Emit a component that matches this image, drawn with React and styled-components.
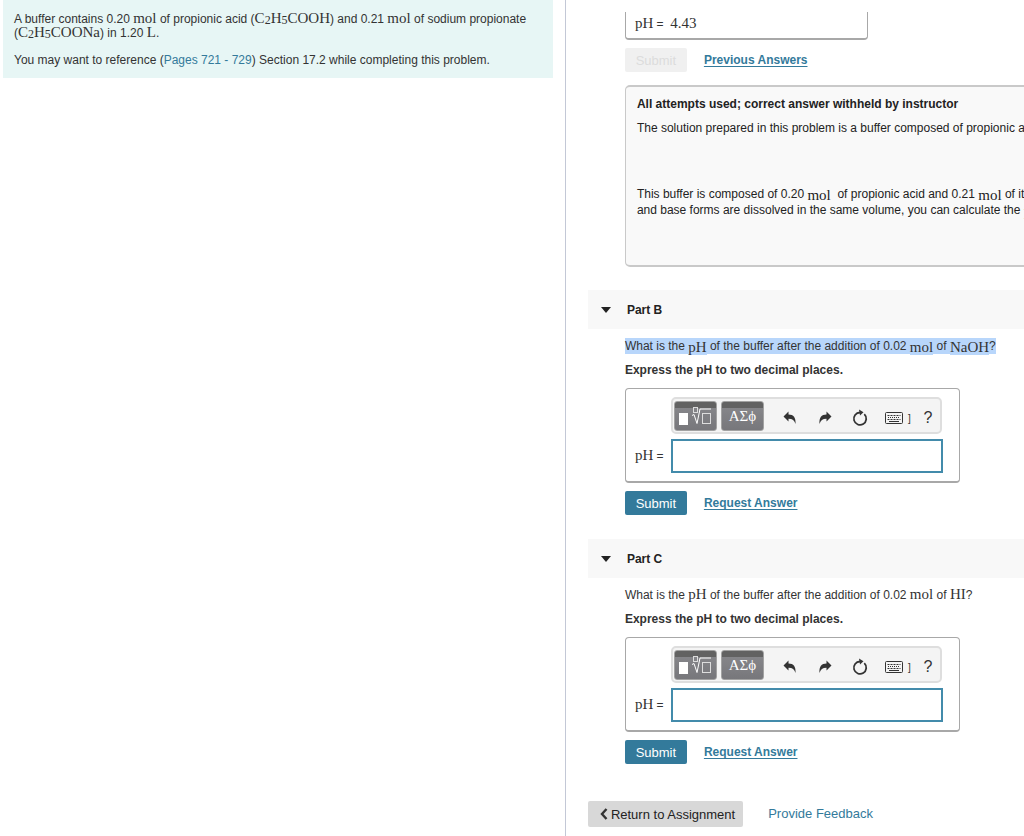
import React from 'react';
import styled, { createGlobalStyle, css } from 'styled-components';

const GlobalStyle = createGlobalStyle`
  * { box-sizing: border-box; }
  body {
    margin: 0;
    background: #fff;
    color: #333;
    font: 12px/16px "Liberation Sans", Arial, sans-serif;
  }
  p, h2 { margin: 0; }
  button, input { font-family: inherit; }
`;

const Page = styled.div`
  display: grid;
  grid-template-columns: minmax(0, 21fr) minmax(0, 17fr);
  min-height: 100vh;
`;

const LeftPanel = styled.aside`
  padding: 0 12px 0 3px;
  border-right: 1px solid #c3c8d6;
`;

const RightPanel = styled.main`
  overflow: hidden;
  padding: 12px 0 9px 22px;
`;

const Intro = styled.section`
  padding: 12px 11px 11px;
  background: #e7f6f5;
  line-height: 14px;

  p + p { margin-top: 13px; }
`;

const TextLink = styled.a`
  color: #337a9b;
  text-decoration: none;
`;

const ActionLink = styled.a`
  color: #337a9b;
  font-size: 12px;
  font-weight: bold;
  text-decoration: underline;
  text-underline-offset: 2px;
`;

const Math = styled.span`
  font-family: "Liberation Serif", "Times New Roman", serif;
  font-size: 15px;
  line-height: 0;
  vertical-align: ${({ $low }) => ($low ? '-2px' : 'baseline')};
`;

const Sub = styled.span`
  font-size: 12px;
  vertical-align: -1px;
`;

const Content = styled.div`
  padding-left: 37px;
`;

const PreviousAnswer = styled.div`
  width: 243px;
  height: 28px;
  padding: 4px 9px;
  border: 1px solid #a8a8a8;
  border-width: 0 1px 2px 1px;
  border-radius: 0 0 4px 4px;
  white-space: pre;
`;

const Actions = styled.div`
  display: flex;
  align-items: center;
  gap: 17px;
  margin-top: 8px;
`;

const SubmitButton = styled.button`
  width: 62px;
  height: 24px;
  padding: 0;
  border: 0;
  border-radius: 2px;
  background: #337a9b;
  color: #fff;
  font-size: 13px;

  &:disabled {
    background: #f0f0f0;
    color: #dcdcdc;
  }
`;

const Feedback = styled.section`
  min-width: 480px;
  height: 182px;
  margin-top: 13px;
  padding: 9px 11px;
  border: 2px solid #c9c9c9;
  border-left-width: 1px;
  border-radius: 5px;
  background: #f9f9f9;
  color: #222;
  white-space: nowrap;

  h2 {
    margin-bottom: 8px;
    font-size: 12px;
    line-height: 16px;
  }

  p + p { margin-top: 50px; }
`;

const PartSection = styled.section`
  margin-top: 23px;

  & + & { margin-top: 24px; }
`;

const PartHeader = styled.button`
  display: flex;
  align-items: center;
  gap: 16px;
  width: 100%;
  height: 39px;
  padding: 0 13px;
  border: 0;
  background: #f8f8f8;
  color: #222;
  font-size: 12px;
  font-weight: bold;
`;

const Question = styled.p`
  height: 16px;
  margin-top: 9px;
  white-space: nowrap;

  mark {
    padding: 1px 0;
    background: #b8d6fb;
    color: inherit;
  }

  mark span { background: #b8d6fb; }
`;

const Instruction = styled.p`
  margin-top: 8px;
  font-weight: bold;
`;

const AnswerBox = styled.div`
  display: grid;
  grid-template-columns: 36px minmax(0, 1fr);
  row-gap: 5px;
  align-items: center;
  width: 335px;
  margin-top: 10px;
  padding: 8px 16px 8px 9px;
  border: 1px solid #a8a8a8;
  border-bottom-width: 2px;
  border-radius: 4px;
`;

const Toolbar = styled.div`
  grid-column: 2;
  display: flex;
  align-items: center;
  height: 37px;
  margin-right: 1px;
  padding-left: 1px;
  border: 2px solid #dedede;
  border-radius: 5px;
  background: #f4f4f4;
`;

const toolReset = css`
  display: flex;
  align-items: center;
  justify-content: center;
  flex-shrink: 0;
  padding: 0;
  border: 0;
`;

const PaletteButton = styled.button`
  ${toolReset}
  width: 43px;
  height: 30px;
  margin-right: 4px;
  border: 1px solid #a2a2a2;
  border-radius: 3px;
  background: linear-gradient(#626262 0 6px, #858589 6px, #77777b);
  color: #fff;
  font: 15px/24px "Liberation Serif", serif;
`;

const ToolButton = styled.button`
  ${toolReset}
  width: 35px;
  height: 30px;
  padding-top: 5px;
  background: none;
  color: #333;
  font-size: 16px;
`;

const Tools = styled.div`
  display: flex;
  margin-left: 5px;
`;

const AnswerInput = styled.input`
  width: 100%;
  height: 34px;
  padding: 0 8px;
  border: 2px solid #438bab;
  border-radius: 0;
  background: #fff;
  font-size: 14px;
  outline: 0;
`;

const Footer = styled.footer`
  display: flex;
  align-items: center;
  gap: 25px;
  margin-top: 37px;
  font-size: 13px;
`;

const ReturnButton = styled.button`
  display: flex;
  align-items: center;
  gap: 3px;
  height: 26px;
  padding: 0 8px 0 12px;
  border: 0;
  border-radius: 2px;
  background: #d8d8d8;
  color: #222;
  font-size: 13px;
  white-space: nowrap;
`;

function TemplateIcon() {
  return (
    <svg width="34" height="20" viewBox="0 0 34 20" fill="none" stroke="#fff">
      <rect x="1" y="7" width="9" height="12" fill="#fff" stroke="none" />
      <rect x="15.5" y="1.5" width="4" height="5" stroke="#ddd" />
      <path d="M14 9.500l2-1 3 9 3-14.500h11" />
      <rect x="24.500" y="7.500" width="8" height="10" stroke="#ddd" />
    </svg>
  );
}

function CurvedArrow({ flip }) {
  return (
    <svg width="14" height="14" viewBox="0 0 14 14">
      <path
        d="M0.500 5.500L5.500 0.500V3.500C10.500 3.500 13 6.500 12.500 13C11.500 9.500 9.500 7.800 5.500 7.800V10.500Z"
        fill="#333"
        transform={flip ? 'matrix(-1 0 0 1 14 0)' : undefined}
      />
    </svg>
  );
}

function ResetIcon() {
  return (
    <svg width="16" height="18" viewBox="0 0 16 18">
      <path d="M12.300 5.200A6.200 6.200 0 1 1 8 3.500" fill="none" stroke="#333" strokeWidth="1.800" />
      <path d="M7 0.500L11.500 3.300L8 6.500Z" fill="#333" />
    </svg>
  );
}

function KeyboardIcon() {
  return (
    <svg width="18" height="12" viewBox="0 0 18 12" fill="none" stroke="#333">
      <rect x="0.500" y="0.500" width="17" height="11" rx="1" />
      <path d="M2.500 3.500h13" strokeDasharray="2 1" />
      <path d="M3 5.500h12" strokeDasharray="1 1" />
      <path d="M2.500 7.500h13" strokeDasharray="2 1" />
      <path d="M4 9.500h10" />
    </svg>
  );
}

const KeyboardButton = styled(ToolButton)`
  gap: 5px;
  width: 40px;
  font-size: 10px;
`;

const HelpButton = styled(ToolButton)`
  width: 20px;
`;

function Answer({ id }) {
  return (
    <AnswerBox>
      <Toolbar>
        <PaletteButton type="button" aria-label="Templates"><TemplateIcon /></PaletteButton>
        <PaletteButton type="button">ΑΣϕ</PaletteButton>
        <Tools>
          <ToolButton type="button" aria-label="Undo"><CurvedArrow /></ToolButton>
          <ToolButton type="button" aria-label="Redo"><CurvedArrow flip /></ToolButton>
          <ToolButton type="button" aria-label="Reset"><ResetIcon /></ToolButton>
          <KeyboardButton type="button" aria-label="Keyboard shortcuts"><KeyboardIcon />]</KeyboardButton>
          <HelpButton type="button">?</HelpButton>
        </Tools>
      </Toolbar>
      <label htmlFor={id}><Math>pH</Math> =</label>
      <AnswerInput id={id} type="text" />
    </AnswerBox>
  );
}

function Part({ name, id, children }) {
  return (
    <PartSection>
      <PartHeader type="button">
        <svg width="10" height="6" viewBox="0 0 10 6"><path d="M0 0h10L5 6z" fill="#222" /></svg>
        {name}
      </PartHeader>
      <Content>
        <Question>{children}</Question>
        <Instruction>Express the pH to two decimal places.</Instruction>
        <Answer id={id} />
        <Actions>
          <SubmitButton type="button">Submit</SubmitButton>
          <ActionLink href="#request">Request Answer</ActionLink>
        </Actions>
      </Content>
    </PartSection>
  );
}

function App() {
  return (
    <Page>
      <GlobalStyle />
      <LeftPanel>
        <Intro>
          <p>
            A buffer contains 0.20 <Math>mol</Math> of propionic acid (
            <Math>C<Sub>2</Sub>H<Sub>5</Sub>COOH</Math>) and 0.21 <Math>mol</Math> of sodium propionate
            {' '}(<Math>C<Sub>2</Sub>H<Sub>5</Sub>COONa</Math>) in 1.20 <Math>L</Math>.
          </p>
          <p>
            You may want to reference (<TextLink href="#pages">Pages 721 - 729</TextLink>) Section 17.2
            while completing this problem.
          </p>
        </Intro>
      </LeftPanel>

      <RightPanel>
        <Content>
          <PreviousAnswer><Math>pH</Math> =  <Math>4.43</Math></PreviousAnswer>
          <Actions>
            <SubmitButton type="button" disabled>Submit</SubmitButton>
            <ActionLink href="#previous">Previous Answers</ActionLink>
          </Actions>
          <Feedback>
            <h2>All attempts used; correct answer withheld by instructor</h2>
            <p>The solution prepared in this problem is a buffer composed of propionic acid</p>
            <p>
              This buffer is composed of 0.20 <Math $low>mol</Math>&nbsp; of propionic acid and
              {' '}0.21 <Math $low>mol</Math> of its
              <br />
              and base forms are dissolved in the same volume, you can calculate the <Math $low>pH</Math>
            </p>
          </Feedback>
        </Content>

        <Part name="Part B" id="answer-b">
          <mark>
            What is the <Math $low>pH</Math> of the buffer after the addition of 0.02
            {' '}<Math $low>mol</Math> of <Math $low>NaOH</Math>?
          </mark>
        </Part>

        <Part name="Part C" id="answer-c">
          What is the <Math>pH</Math> of the buffer after the addition of 0.02
          {' '}<Math>mol</Math> of <Math>HI</Math>?
        </Part>

        <Footer>
          <ReturnButton type="button">
            <svg width="8" height="12" viewBox="0 0 8 12">
              <path d="M6.500 1L2 6l4.500 5" fill="none" stroke="#333" strokeWidth="2.400" />
            </svg>
            Return to Assignment
          </ReturnButton>
          <TextLink href="#feedback">Provide Feedback</TextLink>
        </Footer>
      </RightPanel>
    </Page>
  );
}

export default App;
